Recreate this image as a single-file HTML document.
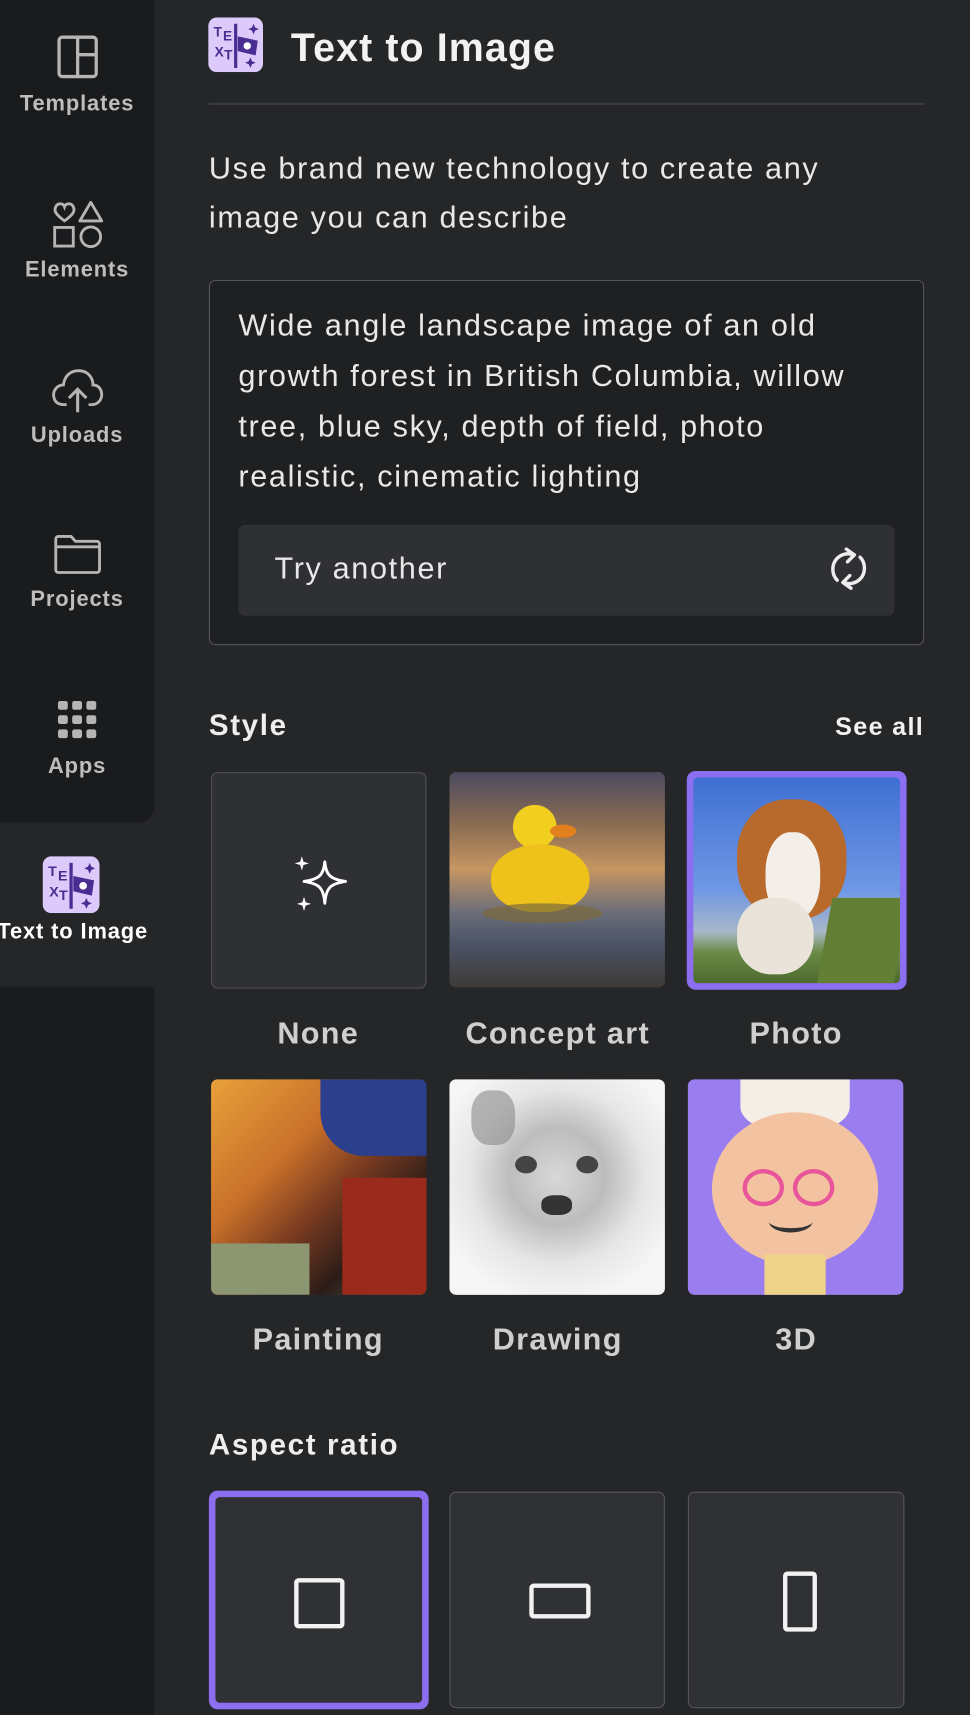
<!DOCTYPE html>
<html><head><meta charset="utf-8">
<style>
html,body{margin:0;padding:0;background:#252628;overflow:hidden}
body{width:970px;height:1714px}
#w{position:absolute;left:0;top:0;width:887px;height:1568px;transform:scale(1.0936);transform-origin:0 0;font-family:"Liberation Sans",sans-serif;background:#252628}
.a{position:absolute}
.sb{left:0;top:0;width:141px;height:1568px;background:#1a1b1d}
.nav{position:absolute;left:0;width:141px;text-align:center;color:#bdbdbd;font-size:20px;font-weight:bold;letter-spacing:0.8px}
.nav svg{display:block;margin:0 auto}
.t{color:#e8e8e8;font-size:28px;letter-spacing:1.5px}
.tile{position:absolute;border-radius:6px;overflow:hidden}
.lab{position:absolute;width:200px;text-align:center;color:#cfcfcf;font-size:28px;font-weight:bold;letter-spacing:1.2px}
</style></head><body><div id="w">
<div class="a sb"></div>
<div class="a" style="left:0;top:740px;width:141px;height:162px;background:#252628"></div>
<div class="a" style="left:0;top:0;width:141px;height:752px;background:#1a1b1d;border-bottom-right-radius:14px"></div>

<div class="nav" style="top:32px">
<svg width="40" height="40" viewBox="0 0 40 40"><rect x="3" y="2" width="34" height="36" rx="3" fill="none" stroke="#b5b5b5" stroke-width="3"/><path d="M20 2V38M20 18H37" stroke="#b5b5b5" stroke-width="3"/></svg>
<div style="margin-top:12px">Templates</div></div>

<div class="nav" style="top:183px">
<svg width="48" height="44" viewBox="0 0 48 44"><path d="M12 19C4 13 2 10 4 6 6 2 11 3 12 6 13 3 18 2 20 6 22 10 20 13 12 19Z" fill="none" stroke="#b5b5b5" stroke-width="2.6"/><path d="M36 2L46 19H26Z" fill="none" stroke="#b5b5b5" stroke-width="2.6" stroke-linejoin="round"/><rect x="3" y="25" width="17" height="17" fill="none" stroke="#b5b5b5" stroke-width="2.6"/><circle cx="36" cy="33.5" r="9" fill="none" stroke="#b5b5b5" stroke-width="2.6"/></svg>
<div style="margin-top:9px">Elements</div></div>

<div class="nav" style="top:336px">
<svg width="48" height="42" viewBox="0 0 48 42"><path d="M14 34H11C5 34 2 30 2 25 2 20 6 16 11 16 12 8 17 3 25 3 33 3 38 9 38 16 43 16 46 20 46 25 46 30 42 34 37 34H34" fill="none" stroke="#b5b5b5" stroke-width="2.6"/><path d="M24 41V21M16 28L24 20 32 28" fill="none" stroke="#b5b5b5" stroke-width="2.8"/></svg>
<div style="margin-top:9px">Uploads</div></div>

<div class="nav" style="top:488px">
<svg width="46" height="38" viewBox="0 0 46 38"><path d="M3 5C3 3.5 4 2.5 5.5 2.5H17L21 7H40.5C42 7 43 8 43 9.5V33C43 34.5 42 35.5 40.5 35.5H5.5C4 35.5 3 34.5 3 33Z" fill="none" stroke="#b5b5b5" stroke-width="2.6"/><path d="M3 12H43" stroke="#b5b5b5" stroke-width="2.6"/></svg>
<div style="margin-top:11px">Projects</div></div>

<div class="nav" style="top:640px">
<svg width="38" height="36" viewBox="0 0 38 36" fill="#b5b5b5"><rect x="1" y="1" width="9" height="8" rx="2"/><rect x="14" y="1" width="9" height="8" rx="2"/><rect x="27" y="1" width="9" height="8" rx="2"/><rect x="1" y="14" width="9" height="8" rx="2"/><rect x="14" y="14" width="9" height="8" rx="2"/><rect x="27" y="14" width="9" height="8" rx="2"/><rect x="1" y="27" width="9" height="8" rx="2"/><rect x="14" y="27" width="9" height="8" rx="2"/><rect x="27" y="27" width="9" height="8" rx="2"/></svg>
<div style="margin-top:14px">Apps</div></div>

<svg class="a" style="left:39px;top:783px" width="52" height="52" viewBox="0 0 52 52"><rect width="52" height="52" rx="8" fill="#dccafb"/><g fill="#4a2d91" font-family="Liberation Sans" font-weight="bold" font-size="13"><text x="5" y="18">T</text><text x="14" y="22">E</text><text x="6" y="37">X</text><text x="15" y="40">T</text></g><path d="M26 6V48" stroke="#4a2d91" stroke-width="3"/><path d="M28 18L47 22 45 36 28 32Z" fill="#4a2d91"/><circle cx="37" cy="27" r="3.5" fill="#fff"/><path d="M43 6l1.5 3.5L48 11l-3.5 1.5L43 16l-1.5-3.5L38 11l3.5-1.5Z" fill="#4a2d91"/><path d="M40 38l1.5 3.5L45 43l-3.5 1.5L40 48l-1.5-3.5L35 43l3.5-1.5Z" fill="#4a2d91"/></svg>
<div class="nav" style="top:841px;color:#fff;font-size:20px;width:141px;left:-4px;white-space:nowrap">Text to Image</div>

<!-- header -->
<svg class="a" style="left:190px;top:16px" width="51" height="50" viewBox="0 0 52 52"><rect width="52" height="52" rx="8" fill="#dccafb"/><g fill="#4a2d91" font-family="Liberation Sans" font-weight="bold" font-size="13"><text x="5" y="18">T</text><text x="14" y="22">E</text><text x="6" y="37">X</text><text x="15" y="40">T</text></g><path d="M26 6V48" stroke="#4a2d91" stroke-width="3"/><path d="M28 18L47 22 45 36 28 32Z" fill="#4a2d91"/><circle cx="37" cy="27" r="3.5" fill="#fff"/><path d="M43 6l1.5 3.5L48 11l-3.5 1.5L43 16l-1.5-3.5L38 11l3.5-1.5Z" fill="#4a2d91"/><path d="M40 38l1.5 3.5L45 43l-3.5 1.5L40 48l-1.5-3.5L35 43l3.5-1.5Z" fill="#4a2d91"/></svg>
<div class="a" style="left:266px;top:23px;font-size:36px;font-weight:bold;color:#f2f2f2;letter-spacing:1px;white-space:nowrap">Text to Image</div>
<div class="a" style="left:191px;top:94px;width:654px;height:2px;background:#3a3b3e"></div>

<div class="a t" style="left:191px;top:131px;line-height:45px;width:680px;white-space:nowrap">Use brand new technology to create any<br>image you can describe</div>

<div class="a" style="left:191px;top:256px;width:652px;height:332px;border:1px solid #55565a;border-radius:6px;background:#1f2022"></div>
<div class="a t" style="left:218px;top:275px;line-height:46px;width:640px;white-space:nowrap">Wide angle landscape image of an old<br>growth forest in British Columbia, willow<br>tree, blue sky, depth of field, photo<br>realistic, cinematic lighting</div>
<div class="a" style="left:218px;top:480px;width:600px;height:83px;background:#2f3033;border-radius:6px"></div>
<div class="a t" style="left:251px;top:504px">Try another</div>
<svg class="a" style="left:755px;top:499px" width="42" height="42" viewBox="0 0 40 40"><path d="M10 30C5 25 5 16 10 11 14 7 20 6 24 8" fill="none" stroke="#eee" stroke-width="3" stroke-linecap="round"/><path d="M18 3L25 8 19 14" fill="none" stroke="#eee" stroke-width="3" stroke-linecap="round" stroke-linejoin="round"/><path d="M30 10C35 15 35 24 30 29 26 33 20 34 16 32" fill="none" stroke="#eee" stroke-width="3" stroke-linecap="round"/><path d="M22 37L15 32 21 26" fill="none" stroke="#eee" stroke-width="3" stroke-linecap="round" stroke-linejoin="round"/></svg>

<div class="a" style="left:191px;top:648px;font-size:27px;font-weight:bold;color:#eee;letter-spacing:1.5px">Style</div>
<div class="a" style="right:42px;top:651px;font-size:23px;font-weight:bold;color:#f2f2f2;letter-spacing:1.2px">See all</div>

<!-- row 1 -->
<div class="tile" style="left:193px;top:706px;width:195px;height:196px;background:#2f3033;border:1px solid #505154"></div>
<svg class="a" style="left:264px;top:780px" width="56" height="56" viewBox="0 0 56 56"><path d="M33 8C34 20 38 24 52 26 38 28 34 32 33 46 32 32 28 28 14 26 28 24 32 20 33 8Z" fill="none" stroke="#fff" stroke-width="2.6" stroke-linejoin="round"/><path d="M12 3l1.5 5 5 1.5-5 1.5L12 16l-1.5-5-5-1.5 5-1.5Z" fill="#fff"/><path d="M14 40l1.5 5 5 1.5-5 1.5L14 53l-1.5-5-5-1.5 5-1.5Z" fill="#fff"/></svg>

<div class="tile" style="left:411px;top:706px;width:197px;height:197px;background:linear-gradient(180deg,#4a4a5e 0%,#8d6d52 25%,#c69662 45%,#6c6e7a 65%,#4b5366 80%,#3e3a36 100%)">
<div class="a" style="left:58px;top:30px;width:40px;height:40px;border-radius:50%;background:#f1cf1e"></div>
<div class="a" style="left:92px;top:48px;width:24px;height:12px;border-radius:50%;background:#e2801d"></div>
<div class="a" style="left:38px;top:66px;width:90px;height:62px;border-radius:50% 50% 45% 45%;background:#eec21a"></div>
<div class="a" style="left:30px;top:120px;width:110px;height:18px;border-radius:50%;background:#7a6a3a;opacity:.7"></div>
</div>

<div class="tile" style="left:628px;top:705px;width:201px;height:200px;border-radius:8px;background:#8c6ef0">
<div class="a" style="left:6px;top:6px;width:189px;height:188px;border-radius:4px;overflow:hidden;background:linear-gradient(180deg,#3f6fd3 0%,#6f98e4 55%,#a9b8c8 75%,#6b8a46 85%,#4d6a2e 100%)">
<div class="a" style="left:40px;top:20px;width:100px;height:110px;border-radius:45%;background:#b86a2c"></div>
<div class="a" style="left:66px;top:50px;width:50px;height:80px;border-radius:45%;background:#f3efe8"></div>
<div class="a" style="left:40px;top:110px;width:70px;height:70px;border-radius:45%;background:#e9e3da"></div>
<div class="a" style="left:120px;top:110px;width:70px;height:80px;background:#627f35;transform:skewX(-10deg)"></div>
</div></div>

<div class="lab" style="left:191px;top:929px">None</div>
<div class="lab" style="left:410px;top:929px;width:200px;white-space:nowrap">Concept art</div>
<div class="lab" style="left:628px;top:929px">Photo</div>

<!-- row 2 -->
<div class="tile" style="left:193px;top:987px;width:197px;height:197px;background:linear-gradient(135deg,#e9a13a 0%,#c8702a 35%,#7a3b20 55%,#2b1c18 75%,#5b6b52 100%)">
<div class="a" style="left:100px;top:0;width:97px;height:70px;background:#2b3f8c;border-radius:0 0 0 40px"></div>
<div class="a" style="left:120px;top:90px;width:77px;height:107px;background:#9a2a1c"></div>
<div class="a" style="left:0;top:150px;width:90px;height:47px;background:#8c9671"></div>
</div>
<div class="tile" style="left:411px;top:987px;width:197px;height:197px;background:radial-gradient(circle at 50% 45%,#d8d8d8 0%,#bdbdbd 30%,#e6e6e6 55%,#f6f6f6 80%)">
<div class="a" style="left:60px;top:70px;width:20px;height:16px;border-radius:50%;background:#444"></div>
<div class="a" style="left:116px;top:70px;width:20px;height:16px;border-radius:50%;background:#444"></div>
<div class="a" style="left:84px;top:106px;width:28px;height:18px;border-radius:40%;background:#333"></div>
<div class="a" style="left:20px;top:10px;width:40px;height:50px;border-radius:40%;background:#8a8a8a;opacity:.6"></div>
</div>
<div class="tile" style="left:629px;top:987px;width:197px;height:197px;background:#9a7ef0">
<div class="a" style="left:48px;top:0;width:100px;height:50px;border-radius:0 0 50% 50%;background:#f3efe6"></div>
<div class="a" style="left:22px;top:30px;width:152px;height:140px;border-radius:50%;background:#f3c3a1"></div>
<div class="a" style="left:70px;top:160px;width:56px;height:37px;background:#f0d38a"></div>
<div class="a" style="left:50px;top:82px;width:30px;height:26px;border:4px solid #e8559a;border-radius:50%"></div>
<div class="a" style="left:96px;top:82px;width:30px;height:26px;border:4px solid #e8559a;border-radius:50%"></div>
<div class="a" style="left:74px;top:120px;width:40px;height:16px;border-bottom:4px solid #333;border-radius:0 0 50% 50%"></div>
</div>

<div class="lab" style="left:191px;top:1209px">Painting</div>
<div class="lab" style="left:410px;top:1209px">Drawing</div>
<div class="lab" style="left:628px;top:1209px">3D</div>

<div class="a" style="left:191px;top:1306px;font-size:27px;font-weight:bold;color:#eee;letter-spacing:1.5px">Aspect ratio</div>

<div class="tile" style="left:191px;top:1363px;width:201px;height:200px;border-radius:8px;background:#8c6ef0"><div class="a" style="left:6px;top:6px;width:189px;height:188px;border-radius:4px;background:#303134"></div></div>
<div class="a" style="left:269px;top:1443px;width:38px;height:38px;border:4px solid #f2f2f2;border-radius:4px"></div>
<div class="tile" style="left:411px;top:1364px;width:195px;height:196px;background:#303134;border:1px solid #55565a"></div>
<div class="a" style="left:484px;top:1448px;width:48px;height:24px;border:4px solid #f2f2f2;border-radius:4px"></div>
<div class="tile" style="left:629px;top:1364px;width:196px;height:196px;background:#303134;border:1px solid #55565a"></div>
<div class="a" style="left:716px;top:1437px;width:23px;height:47px;border:4px solid #f2f2f2;border-radius:4px"></div>
</div></body></html>
